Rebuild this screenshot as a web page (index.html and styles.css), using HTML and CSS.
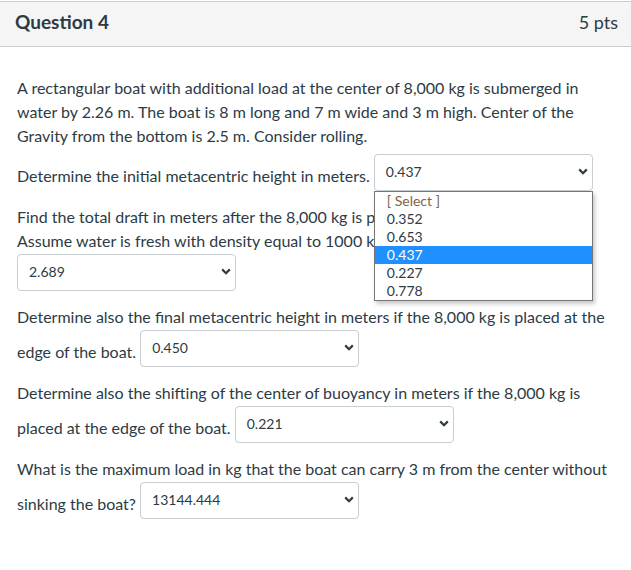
FILE: index.html
```html
<!DOCTYPE html>
<html lang="en">

<head>
    <meta charset="UTF-8">
    <meta name="viewport" content="width=device-width, initial-scale=1.0">
    <title>Question 4</title>
    <link rel="stylesheet" href="styles.css">
</head>

<body>
    <div class="question">
        <div class="header">
            <span class="question-name">Question 4</span>
            <span class="points">5 pts</span>
        </div>

        <div class="question-text">
            <p class="intro">A rectangular boat with additional load at the center of 8,000 kg is submerged in water by 2.26 m. The boat is 8 m long and 7 m wide and 3 m high. Center of the Gravity from the bottom is 2.5 m. Consider rolling.</p>

            <p>Determine the initial metacentric height in meters.
                <span class="select open">
                    <span class="value">0.437</span>
                    <svg class="chevron" width="10" height="7" viewBox="0 0 10 7"><path d="M1.2 1.4 L5 5.2 L8.8 1.4" fill="none" stroke="#2d3b45" stroke-width="2.2"/></svg>
                    <span class="options">
                        <span class="option placeholder">[ Select ]</span>
                        <span class="option">0.352</span>
                        <span class="option">0.653</span>
                        <span class="option selected">0.437</span>
                        <span class="option">0.227</span>
                        <span class="option">0.778</span>
                    </span>
                </span>
            </p>

            <p>Find the total draft in meters after the 8,000 kg is placed at the center.<br>
                Assume water is fresh with density equal to 1000 kg/m&sup3;.
                <span class="select">
                    <span class="value">2.689</span>
                    <svg class="chevron" width="10" height="7" viewBox="0 0 10 7"><path d="M1.2 1.4 L5 5.2 L8.8 1.4" fill="none" stroke="#2d3b45" stroke-width="2.2"/></svg>
                </span>
            </p>

            <p>Determine also the final metacentric height in meters if the 8,000 kg is placed at the edge of the boat.
                <span class="select">
                    <span class="value">0.450</span>
                    <svg class="chevron" width="10" height="7" viewBox="0 0 10 7"><path d="M1.2 1.4 L5 5.2 L8.8 1.4" fill="none" stroke="#2d3b45" stroke-width="2.2"/></svg>
                </span>
            </p>

            <p>Determine also the shifting of the center of buoyancy in meters if the 8,000 kg is placed at the edge of the boat.
                <span class="select">
                    <span class="value">0.221</span>
                    <svg class="chevron" width="10" height="7" viewBox="0 0 10 7"><path d="M1.2 1.4 L5 5.2 L8.8 1.4" fill="none" stroke="#2d3b45" stroke-width="2.2"/></svg>
                </span>
            </p>

            <p>What is the maximum load in kg that the boat can carry 3 m from the center without sinking the boat?
                <span class="select">
                    <span class="value">13144.444</span>
                    <svg class="chevron" width="10" height="7" viewBox="0 0 10 7"><path d="M1.2 1.4 L5 5.2 L8.8 1.4" fill="none" stroke="#2d3b45" stroke-width="2.2"/></svg>
                </span>
            </p>
        </div>
    </div>
</body>

</html>
```

FILE: styles.css
```css
* {
    margin: 0;
    padding: 0;
    box-sizing: border-box;
}

body {
    background-color: #fff;
    color: #2d3b45;
    font-family: Lato, "Open Sans", sans-serif;
    font-size: 16px;
    line-height: 24px;
    padding-top: 1px;
}

.header {
    display: flex;
    justify-content: space-between;
    align-items: baseline;
    background-color: #f5f5f5;
    border-top: 1px solid #c7cdd1;
    border-bottom: 1px solid #c7cdd1;
    padding: 8px 13px 12px 15px;
}

.question-name {
    font-size: 19px;
    font-weight: bold;
}

.points {
    font-size: 18px;
}

.question-text {
    padding: 29px 17px 0 17px;
}

.question-text p {
    margin-bottom: 14px;
}

.question-text p.intro {
    margin-bottom: 5px;
}

.select {
    position: relative;
    display: inline-flex;
    align-items: center;
    justify-content: space-between;
    width: 219px;
    height: 37px;
    margin-top: 1px;
    padding: 0 4px 2px 11px;
    border: 1px solid #c7cdd1;
    border-radius: 4px;
    background-color: #fff;
    font-size: 14px;
    line-height: 20px;
    vertical-align: 5px;
}

.chevron {
    display: block;
}

.options {
    position: absolute;
    top: calc(100% + 1px);
    left: -1px;
    width: 219px;
    background-color: #fff;
    border: 1px solid #767676;
    box-shadow: 2px 3px 4px rgba(0, 0, 0, 0.22);
    z-index: 10;
}

.option {
    display: block;
    height: 18px;
    line-height: 18px;
    padding-left: 12px;
    font-size: 14px;
    color: #2d3b45;
}

.option.placeholder {
    color: #7d6548;
}

.option.selected {
    background-color: #1e90ff;
    color: #fff;
}
```
